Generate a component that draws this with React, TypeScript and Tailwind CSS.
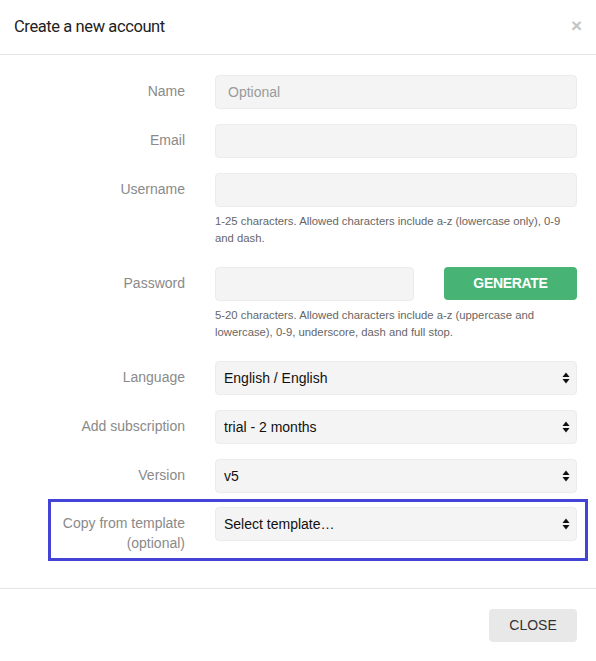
import React from 'react';

const SelectArrows = () => (
  <svg width="8" height="13" viewBox="0 0 8 13" className="absolute right-[6px] top-1/2 -translate-y-1/2">
    <path d="M4 1 L7.5 5.5 L0.5 5.5 Z" fill="#111" />
    <path d="M4 12 L7.5 7.5 L0.5 7.5 Z" fill="#111" />
  </svg>
);

const Field = ({ placeholder, className = 'w-[362px]' }: { placeholder?: string; className?: string }) => (
  <div className={`${className} h-[34px] rounded-[4px] border border-[#ececec] bg-[#f4f4f4] flex items-center px-[12px] text-[14px] text-[#9a9a9a]`}>
    {placeholder}
  </div>
);

const Select = ({ value }: { value: string }) => (
  <div className="relative w-[362px] h-[34px] rounded-[4px] border border-[#ececec] bg-[#f4f4f4] flex items-center pl-[8px] text-[14px] text-[#111]">
    {value}
    <SelectArrows />
  </div>
);

const Label = ({ children, className = 'w-[185px]' }: { children: React.ReactNode; className?: string }) => (
  <div className={`${className} shrink-0 text-right text-[14px] leading-[20px] text-[#8a8a8a] pt-[6px]`}>{children}</div>
);

const Help = ({ children }: { children: React.ReactNode }) => (
  <p className="mt-[6px] text-[11.3px] leading-[17px] text-[#666]">{children}</p>
);

export default function App() {
  return (
    <div className="w-[596px] h-[661px] bg-white flex flex-col" style={{ fontFamily: '"Liberation Sans", Arial, sans-serif' }}>
      <div className="h-[55px] shrink-0 border-b border-[#e5e5e5] flex items-center justify-between pl-[14px] pr-[14px]">
        <h2 className="text-[16.5px] text-[#222] tracking-[-0.4px]" style={{ fontFamily: 'Roboto, sans-serif' }}>Create a new account</h2>
        <span className="text-[19px] font-bold text-[#c4c4c4] leading-none -mt-[4px]">×</span>
      </div>

      <div className="flex-1 pt-[20px]">
        <div className="flex">
          <Label>Name</Label>
          <div className="ml-[30px]"><Field placeholder="Optional" /></div>
        </div>
        <div className="flex mt-[15px]">
          <Label>Email</Label>
          <div className="ml-[30px]"><Field /></div>
        </div>
        <div className="flex mt-[15px]">
          <Label>Username</Label>
          <div className="ml-[30px] w-[362px]">
            <Field />
            <Help>1-25 characters. Allowed characters include a-z (lowercase only), 0-9 and dash.</Help>
          </div>
        </div>
        <div className="flex mt-[20px]">
          <Label>Password</Label>
          <div className="ml-[30px] w-[362px]">
            <div className="flex justify-between">
              <Field className="w-[199px]" />
              <button className="w-[133px] h-[33px] rounded-[4px] bg-[#47b475] text-white text-[14px] font-bold tracking-[-0.3px]">GENERATE</button>
            </div>
            <Help>5-20 characters. Allowed characters include a-z (uppercase and lowercase), 0-9, underscore, dash and full stop.</Help>
          </div>
        </div>
        <div className="flex mt-[20px]">
          <Label>Language</Label>
          <div className="ml-[30px]"><Select value="English / English" /></div>
        </div>
        <div className="flex mt-[15px]">
          <Label>Add subscription</Label>
          <div className="ml-[30px]"><Select value="trial - 2 months" /></div>
        </div>
        <div className="flex mt-[15px]">
          <Label>Version</Label>
          <div className="ml-[30px]"><Select value="v5" /></div>
        </div>
        <div className="flex ml-[48px] w-[540px] mt-[6px] border-[3px] border-[#4343d6] pt-[5px] pb-[5px]">
          <Label className="w-[134px]">Copy from template<br />(optional)</Label>
          <div className="ml-[30px]"><Select value="Select template…" /></div>
        </div>
      </div>

      <div className="h-[73px] shrink-0 border-t border-[#e5e5e5] flex items-start justify-end pr-[19px] pt-[20px]">
        <button className="w-[88px] h-[33px] rounded-[4px] bg-[#e8e8e8] text-[14px] text-[#333]">CLOSE</button>
      </div>
    </div>
  );
}
